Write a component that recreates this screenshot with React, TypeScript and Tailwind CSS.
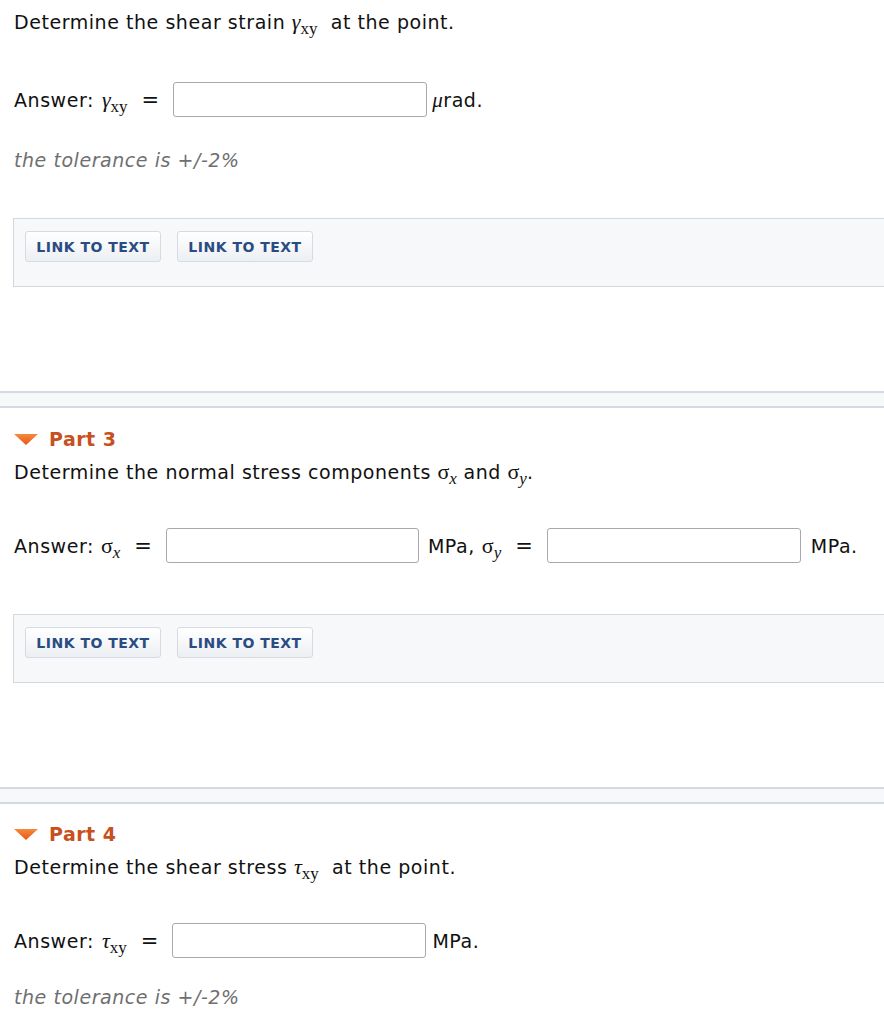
import React from 'react';

const sans = { fontFamily: '"DejaVu Sans", Verdana, sans-serif' };

// γ, σ, τ with subscripts, set in a serif like the math renderer
const Sym = ({ base, sub, italicBase = true, italicSub = false }: { base: string; sub: string; italicBase?: boolean; italicSub?: boolean }) => (
  <span className="font-['Liberation_Serif',serif] text-[22px] leading-none tracking-normal">
    <span className={italicBase ? 'italic' : ''}>{base}</span>
    <span className={`relative top-[5px] text-[17px] ${italicSub ? 'italic' : ''}`}>{sub}</span>
  </span>
);

const Input = ({ w }: { w: string }) => (
  <span className={`inline-block h-[35px] ${w} rounded-[3px] border border-[#a9a9a9] bg-white align-middle`} />
);

const Eq = () => <span className="mx-[14px] text-[21px] tracking-normal">=</span>;

const LinkBox = ({ top }: { top: string }) => (
  <div className={`${top} ml-[13px] mr-[-20px] h-[69px] border border-[#d3d8e0] bg-[#f7f8fa] pl-[11px] pt-[12px]`}>
    <div className="flex gap-[16px]">
      {[0, 1].map(i => (
        <button
          key={i}
          className="h-[31px] w-[136px] rounded-[3px] border border-[#d6dbe2] bg-gradient-to-b from-white to-[#eceff3] text-[14px] font-bold tracking-[0.5px] text-[#294c82]"
        >
          LINK TO TEXT
        </button>
      ))}
    </div>
  </div>
);

const Separator = ({ top }: { top: string }) => (
  <div className={`${top} h-[17px] border-y-2 border-[#d5dae2] bg-[#f7f8fa]`} />
);

const PartHeader = ({ n }: { n: number }) => (
  <div className="flex h-[26px] items-center pl-[13px]">
    <svg width="26" height="13" viewBox="0 0 26 13" className="mt-[1px]">
      <defs>
        <linearGradient id={`tri${n}`} x1="0" y1="0" x2="0" y2="1">
          <stop offset="0" stopColor="#f58a3c" />
          <stop offset="1" stopColor="#e8561a" />
        </linearGradient>
      </defs>
      <polygon points="1,1 25,1 13,12" fill={`url(#tri${n})`} />
    </svg>
    <span className="ml-[10px] text-[19px] font-bold tracking-[0.5px] text-[#c8501f]">Part {n}</span>
  </div>
);

export default function App() {
  return (
    <div className="min-h-[1024px] w-[884px] overflow-hidden bg-white pt-[9px] text-[19px] leading-[26px] tracking-[0.55px] text-[#111]" style={sans}>
      {/* Part 2 tail */}
      <div className="pl-[14px]">
        Determine the shear strain <Sym base="γ" sub="xy" />&nbsp; at the point.
      </div>
      <div className="mt-[47px] flex h-[35px] items-center pl-[14px]">
        <span>Answer: </span>
        <span className="ml-[8px]"><Sym base="γ" sub="xy" /></span>
        <Eq />
        <Input w="w-[254px]" />
        <span className="ml-[5px]"><span className="font-['Liberation_Serif',serif] text-[21px] italic">μ</span>rad.</span>
      </div>
      <div className="mt-[30px] pl-[14px] italic text-[#6f6f6f]">the tolerance is +/-2%</div>

      <LinkBox top="mt-[45px]" />
      <Separator top="mt-[104px]" />

      {/* Part 3 */}
      <div className="mt-[18px]">
        <PartHeader n={3} />
      </div>
      <div className="mt-[7px] pl-[14px]">
        Determine the normal stress components <Sym base="σ" sub="x" italicBase={false} italicSub /> and{' '}
        <Sym base="σ" sub="y" italicBase={false} italicSub />.
      </div>
      <div className="mt-[43px] flex h-[35px] items-center pl-[14px]">
        <span>Answer: </span>
        <span className="ml-[7px]"><Sym base="σ" sub="x" italicBase={false} italicSub /></span>
        <Eq />
        <Input w="w-[253px]" />
        <span className="ml-[9px]">MPa, </span>
        <span className="ml-[7px]"><Sym base="σ" sub="y" italicBase={false} italicSub /></span>
        <Eq />
        <Input w="w-[254px]" />
        <span className="ml-[10px]">MPa.</span>
      </div>

      <LinkBox top="mt-[51px]" />
      <Separator top="mt-[104px]" />

      {/* Part 4 */}
      <div className="mt-[17px]">
        <PartHeader n={4} />
      </div>
      <div className="mt-[7px] pl-[14px]">
        Determine the shear stress <Sym base="τ" sub="xy" />&nbsp; at the point.
      </div>
      <div className="mt-[43px] flex h-[35px] items-center pl-[14px]">
        <span>Answer: </span>
        <span className="ml-[8px]"><Sym base="τ" sub="xy" /></span>
        <Eq />
        <Input w="w-[254px]" />
        <span className="ml-[6px]">MPa.</span>
      </div>
      <div className="mt-[26px] pl-[14px] italic text-[#6f6f6f]">the tolerance is +/-2%</div>
    </div>
  );
}
